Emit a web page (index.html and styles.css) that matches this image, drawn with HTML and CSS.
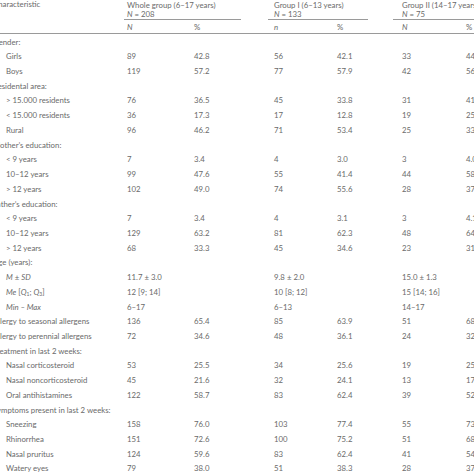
FILE: index.html
```html
<!DOCTYPE html>
<html>
<head>
<meta charset="utf-8">
<link rel="stylesheet" href="styles.css">
</head>
<body>
<div class="table">
  <div class="hrow1">
    <div class="hlabel">Characteristic</div>
    <div class="group g1"><div class="gin">Whole group (6–17 years)<br><i>N</i> = 208</div></div>
    <div class="group g2"><div class="gin">Group I (6–13 years)<br><i>N</i> = 133</div></div>
    <div class="group g3"><div class="gin">Group II (14–17 years)<br><i>N</i> = 75</div></div>
  </div>
  <div class="hrow2">
    <div></div>
    <div><i>N</i></div><div>%</div>
    <div><i>n</i></div><div>%</div>
    <div><i>N</i></div><div>%</div>
  </div>
  <div class="tbody">
    <div class="row"><div class="cat">Gender:</div></div>
    <div class="row"><div class="item">Girls</div><div>89</div><div>42.8</div><div>56</div><div>42.1</div><div>33</div><div>44.0</div></div>
    <div class="row"><div class="item">Boys</div><div>119</div><div>57.2</div><div>77</div><div>57.9</div><div>42</div><div>56.0</div></div>
    <div class="row"><div class="cat">Residental area:</div></div>
    <div class="row"><div class="item">&gt; 15.000 residents</div><div>76</div><div>36.5</div><div>45</div><div>33.8</div><div>31</div><div>41.3</div></div>
    <div class="row"><div class="item">&lt; 15.000 residents</div><div>36</div><div>17.3</div><div>17</div><div>12.8</div><div>19</div><div>25.3</div></div>
    <div class="row"><div class="item">Rural</div><div>96</div><div>46.2</div><div>71</div><div>53.4</div><div>25</div><div>33.3</div></div>
    <div class="row"><div class="cat">Mother’s education:</div></div>
    <div class="row"><div class="item">&lt; 9 years</div><div>7</div><div>3.4</div><div>4</div><div>3.0</div><div>3</div><div>4.0</div></div>
    <div class="row"><div class="item">10–12 years</div><div>99</div><div>47.6</div><div>55</div><div>41.4</div><div>44</div><div>58.7</div></div>
    <div class="row"><div class="item">&gt; 12 years</div><div>102</div><div>49.0</div><div>74</div><div>55.6</div><div>28</div><div>37.3</div></div>
    <div class="row"><div class="cat">Father’s education:</div></div>
    <div class="row"><div class="item">&lt; 9 years</div><div>7</div><div>3.4</div><div>4</div><div>3.1</div><div>3</div><div>4.1</div></div>
    <div class="row"><div class="item">10–12 years</div><div>129</div><div>63.2</div><div>81</div><div>62.3</div><div>48</div><div>64.9</div></div>
    <div class="row"><div class="item">&gt; 12 years</div><div>68</div><div>33.3</div><div>45</div><div>34.6</div><div>23</div><div>31.1</div></div>
    <div class="row"><div class="cat">Age (years):</div></div>
    <div class="row"><div class="item"><i>M</i> ± <i>SD</i></div><div class="wide">11.7 ± 3.0</div><div>9.8 ± 2.0</div><div></div><div>15.0 ± 1.3</div><div></div></div>
    <div class="row"><div class="item"><i>Me</i> [<i>Q</i><sub>1</sub>; <i>Q</i><sub>3</sub>]</div><div class="wide">12 [9; 14]</div><div>10 [8; 12]</div><div></div><div>15 [14; 16]</div><div></div></div>
    <div class="row"><div class="item"><i>Min – Max</i></div><div class="wide">6–17</div><div>6–13</div><div></div><div>14–17</div><div></div></div>
    <div class="row"><div class="cat">Allergy to seasonal allergens</div><div>136</div><div>65.4</div><div>85</div><div>63.9</div><div>51</div><div>68.0</div></div>
    <div class="row"><div class="cat">Allergy to perennial allergens</div><div>72</div><div>34.6</div><div>48</div><div>36.1</div><div>24</div><div>32.0</div></div>
    <div class="row"><div class="cat">Treatment in last 2 weeks:</div></div>
    <div class="row"><div class="item">Nasal corticosteroid</div><div>53</div><div>25.5</div><div>34</div><div>25.6</div><div>19</div><div>25.3</div></div>
    <div class="row"><div class="item">Nasal noncorticosteroid</div><div>45</div><div>21.6</div><div>32</div><div>24.1</div><div>13</div><div>17.3</div></div>
    <div class="row"><div class="item">Oral antihistamines</div><div>122</div><div>58.7</div><div>83</div><div>62.4</div><div>39</div><div>52.0</div></div>
    <div class="row"><div class="cat">Symptoms present in last 2 weeks:</div></div>
    <div class="row"><div class="item">Sneezing</div><div>158</div><div>76.0</div><div>103</div><div>77.4</div><div>55</div><div>73.3</div></div>
    <div class="row"><div class="item">Rhinorrhea</div><div>151</div><div>72.6</div><div>100</div><div>75.2</div><div>51</div><div>68.0</div></div>
    <div class="row"><div class="item">Nasal pruritus</div><div>124</div><div>59.6</div><div>83</div><div>62.4</div><div>41</div><div>54.7</div></div>
    <div class="row"><div class="item">Watery eyes</div><div>79</div><div>38.0</div><div>51</div><div>38.3</div><div>28</div><div>37.3</div></div>
  </div>
</div>
</body>
</html>
```
FILE: styles.css
```css
html, body {
  margin: 0;
  padding: 0;
  overflow: hidden;
  background: #ffffff;
}
.table {
  margin-left: -7px;
  width: 533px;
  font-family: "Lato", "Liberation Sans", sans-serif;
  font-weight: 400;
  font-size: 7.8px;
  color: #6a6a6a;
}
.hrow1, .hrow2, .row {
  display: grid;
  grid-template-columns: 134px 67px 80px 63px 65px 64px 60px;
}
.hrow1 {
  line-height: 9.5px;
  height: 21px;
}
.hlabel {
  white-space: nowrap;
}
.group {
  grid-column: span 2;
}
.gin {
  white-space: nowrap;
  height: 20px;
  border-bottom: 1px solid #9a9a9a;
  box-sizing: border-box;
  padding-top: 0.5px;
}
.g1 .gin { margin-left: -3px; padding-left: 3px; margin-right: 33px; }
.g2 .gin { margin-left: -6px; padding-left: 6px; margin-right: 34px; }
.g3 .gin { margin-left: -9px; padding-left: 9px; }
.hrow2 {
  height: 12px;
  line-height: 12px;
  border-bottom: 1px solid #9a9a9a;
}
.tbody {
  padding-top: 0.6px;
}
.row {
  height: 14.72px;
  line-height: 14.72px;
  white-space: nowrap;
}
.item {
  padding-left: 13px;
}
.wide {
  grid-column: span 2;
}
sub {
  font-size: 5px;
  line-height: 0;
  vertical-align: -1px;
}
i {
  font-style: italic;
}
```
